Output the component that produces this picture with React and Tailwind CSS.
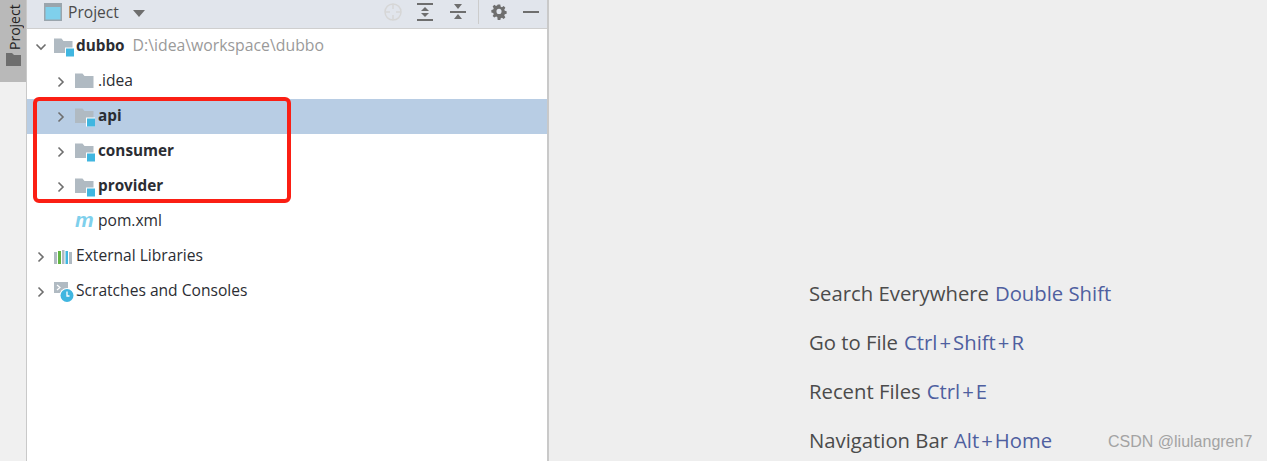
import React from 'react';

const Chevron = ({ open }) => (
  <svg width="12" height="12" viewBox="0 0 12 12" fill="none" stroke="#6e6e6e" strokeWidth="1.6">
    {open ? <path d="M1.5 3.5 6 8l4.5-4.5" /> : <path d="M3.5 1.5 8 6l-4.5 4.5" />}
  </svg>
);

const Folder = ({ module }) => (
  <svg width="21" height="20" viewBox="0 0 21 20">
    <path d="M0 1.500h7.500l2 2.500H18.500V16H0z" fill="#b0bac2" />
    {module && <rect x="11" y="10.500" width="9" height="9" fill="#ffffff" />}
    {module && <rect x="12" y="11.500" width="8" height="8" fill="#40b6e0" />}
  </svg>
);

const Maven = () => (
  <span className="w-[20px] text-left text-[21px] leading-none font-bold italic text-[#7fd0ec] font-['Liberation_Sans',sans-serif] -mt-[5px]">m</span>
);

const Libraries = () => (
  <svg width="20" height="16" viewBox="0 0 20 16">
    <rect x="0" y="3" width="3" height="12" fill="#b0bac2" />
    <rect x="4" y="2" width="3" height="13" fill="#62b543" />
    <rect x="8" y="1" width="2.500" height="14" fill="#b0bac2" />
    <rect x="11.500" y="2" width="2.500" height="13" fill="#40b6e0" />
    <rect x="15" y="3" width="3" height="12" fill="#b0bac2" />
  </svg>
);

const Scratches = () => (
  <svg width="22" height="22" viewBox="0 0 22 22">
    <rect x="0" y="1" width="14" height="11" fill="#b0bac2" />
    <path d="M3 4l3 2.500L3 9" fill="none" stroke="#ffffff" strokeWidth="1.200" />
    <circle cx="13" cy="14.500" r="7.500" fill="#ffffff" />
    <circle cx="13" cy="14.500" r="6.500" fill="#40b6e0" />
    <path d="M13 10.500v4.500h2.500" fill="none" stroke="#ffffff" strokeWidth="1.300" />
  </svg>
);

const Row = ({ indent, chevron = 'closed', icon, selected, bold, name, hint, nested }) => (
  <div className={`h-[35px] flex items-center ${selected ? 'bg-[#b8cde4]' : ''}`}>
    <div className={`${indent} w-[12px] flex-none flex justify-center`}>
      {chevron && <Chevron open={chevron === 'open'} />}
    </div>
    <div className={`${nested ? 'ml-[8px]' : 'ml-[7px]'} w-[22px] flex-none flex justify-start`}>{icon}</div>
    <span className={`pb-[2px] text-[#2b2d33] ${bold ? 'text-[15.300px] font-bold' : 'text-[15.600px]'} ${nested ? 'ml-[1px]' : ''}`}>{name}</span>
    {hint && <span className="pb-[2px] ml-[8px] text-[15.800px] text-[#9a9a9a]">{hint}</span>}
  </div>
);

const Tip = ({ label, keys }) => (
  <div className="h-[49px] flex items-center text-[20.300px] whitespace-nowrap text-[#4b4b4b]">
    {label}
    <span className="ml-[6px] text-[#4f5f9f]">{keys}</span>
  </div>
);

const App = () => (
  <div className="relative w-[1267px] h-[461px] overflow-hidden flex bg-[#eeeeee] font-['Open_Sans','Noto_Sans',sans-serif]">
    {/* tool window strip */}
    <div className="w-[27px] flex-none bg-[#f0f0f0] border-r border-[#c9c9c9]">
      <div className="h-[82px] bg-[#b9b9b9] flex flex-col items-center">
        <span className="mt-[2px] ml-[3px] h-[48px] text-[14px] leading-[26px] text-[#222222] [writing-mode:vertical-rl] rotate-180">Project</span>
        <svg className="mt-[3px]" width="15" height="13" viewBox="0 0 15 13">
          <path d="M0 0h6l2 2h7v11H0z" fill="#6e6e6e" />
        </svg>
      </div>
    </div>

    {/* project panel */}
    <div className="w-[522px] flex-none bg-white border-r-2 border-[#c9c9c9]">
      <div className="h-[29px] pb-[4px] flex items-center bg-[#e1e5ec] border-b border-[#cfcfcf]">
        <svg className="ml-[17px]" width="18" height="18" viewBox="0 0 18 18">
          <rect x="0" y="0" width="18" height="18" fill="#9aa5ad" />
          <rect x="1.500" y="4" width="15" height="12.500" fill="#7fd0ec" />
        </svg>
        <span className="ml-[6px] mt-[2px] text-[15.600px] text-[#4b4b4b]">Project</span>
        <svg className="ml-[14px] mt-[3px]" width="12" height="7" viewBox="0 0 12 7">
          <path d="M0 0h12L6 7z" fill="#6e6e6e" />
        </svg>
        <div className="ml-auto flex items-center">
          <svg width="18" height="18" viewBox="0 0 18 18" fill="none" stroke="#d6d6d6" strokeWidth="1.500">
            <circle cx="9" cy="9" r="8" />
            <path d="M9 1v5M9 12v5M1 9h5M12 9h5" />
          </svg>
          <svg className="ml-[15px]" width="16" height="18" viewBox="0 0 16 18" fill="#6e6e6e">
            <rect x="0" y="0" width="16" height="2" />
            <rect x="0" y="16" width="16" height="2" />
            <path d="M8 4l4 4H4zM8 14l-4-4h8z" />
          </svg>
          <svg className="ml-[17px]" width="16" height="16" viewBox="0 0 16 16" fill="#6e6e6e">
            <path d="M4 0h8L8 5zM4 15h8l-4-5z" />
            <rect x="0" y="7" width="16" height="2" />
          </svg>
          <div className="ml-[12px] w-px h-[24px] bg-[#cccccc]" />
          <svg className="ml-[12px]" width="16" height="16" viewBox="0 0 16 16" fill="#6e6e6e" fillRule="evenodd">
            <path d="M6.500 0h3l.5 2.400 1.500.6 2-1.300 2 2.100-1.300 2 .6 1.500 2.200.5v3l-2.200.5-.6 1.500 1.300 2-2 2-2-1.300-1.500.6-.5 2.400h-3L6 14.600l-1.500-.6-2 1.300-2-2 1.300-2-.6-1.500L-1 9.300v-3l2.200-.5.6-1.500-1.300-2 2-2.100 2 1.300L6 .9zM8 5a3 3 0 1 0 0 6 3 3 0 0 0 0-6z" transform="translate(1.200 .6) scale(.85)" />
          </svg>
          <div className="ml-[16px] mr-[8px] w-[16px] h-[2px] bg-[#6e6e6e]" />
        </div>
      </div>

      <Row indent="ml-[8px]" chevron="open" icon={<Folder module />} bold name="dubbo" hint="D:\idea\workspace\dubbo" />
      <Row nested indent="ml-[28px]" icon={<Folder />} name=".idea" />
      <Row nested indent="ml-[28px]" icon={<Folder module />} selected bold name="api" />
      <Row nested indent="ml-[28px]" icon={<Folder module />} bold name="consumer" />
      <Row nested indent="ml-[28px]" icon={<Folder module />} bold name="provider" />
      <Row nested indent="ml-[28px]" chevron={null} icon={<Maven />} name="pom.xml" />
      <Row indent="ml-[8px]" icon={<Libraries />} name="External Libraries" />
      <Row indent="ml-[8px]" icon={<Scratches />} name="Scratches and Consoles" />
    </div>

    {/* empty editor hints */}
    <div className="flex-1 pl-[260px] pt-[269px]">
      <Tip label="Search Everywhere" keys="Double Shift" />
      <Tip label="Go to File" keys={'Ctrl\u200A+\u200AShift\u200A+\u200AR'} />
      <Tip label="Recent Files" keys={'Ctrl\u200A+\u200AE'} />
      <Tip label="Navigation Bar" keys={'Alt\u200A+\u200AHome'} />
    </div>

    {/* red annotation */}
    <div className="absolute left-[33px] top-[97px] w-[258px] h-[106px] border-[4px] border-[#fb1f14] rounded-[6px]" />
    <span className="absolute left-[1108px] top-[432px] text-[16px] leading-[20px] text-[#a3a3a3] font-['Liberation_Sans',sans-serif]">CSDN @liulangren7</span>
  </div>
);

export default App;
